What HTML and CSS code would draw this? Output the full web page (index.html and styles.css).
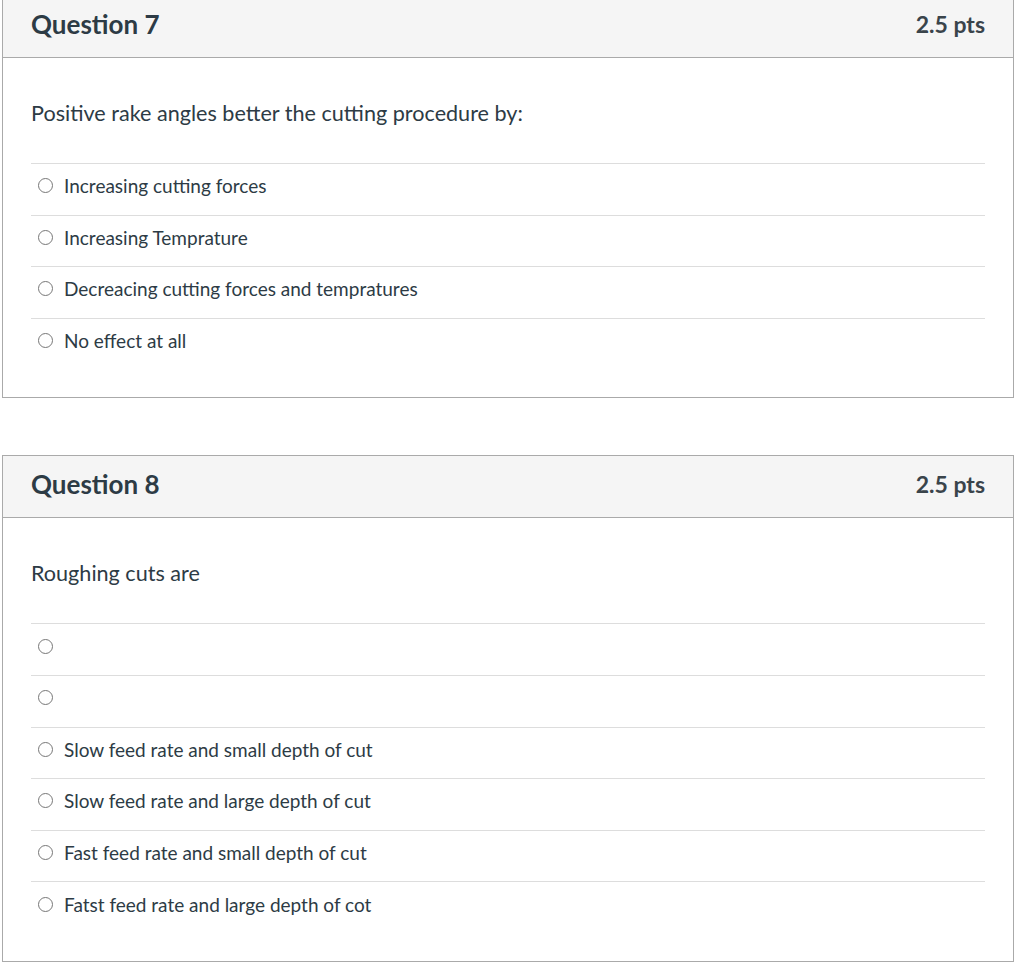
FILE: index.html
```html
<!DOCTYPE html>
<html>
<head>
  <title>Quiz</title>
  <link rel="stylesheet" href="styles.css">
</head>
<body>
  <div class="quiz">
    <div class="question">
      <div class="question-header">
        <h2 class="question-title">Question 7</h2>
        <span class="question-points">2.5 pts</span>
      </div>
      <div class="question-body">
        <div class="question-text">Positive rake angles better the cutting procedure by:</div>
        <div class="answers">
          <label class="answer"><span class="radio"></span><span class="answer-text">Increasing cutting forces</span></label>
          <label class="answer"><span class="radio"></span><span class="answer-text">Increasing Temprature</span></label>
          <label class="answer"><span class="radio"></span><span class="answer-text">Decreacing cutting forces and tempratures</span></label>
          <label class="answer"><span class="radio"></span><span class="answer-text">No effect at all</span></label>
        </div>
      </div>
    </div>

    <div class="question">
      <div class="question-header">
        <h2 class="question-title">Question 8</h2>
        <span class="question-points">2.5 pts</span>
      </div>
      <div class="question-body">
        <div class="question-text">Roughing cuts are</div>
        <div class="answers">
          <label class="answer"><span class="radio"></span><span class="answer-text"></span></label>
          <label class="answer"><span class="radio"></span><span class="answer-text"></span></label>
          <label class="answer"><span class="radio"></span><span class="answer-text">Slow feed rate and small depth of cut</span></label>
          <label class="answer"><span class="radio"></span><span class="answer-text">Slow feed rate and large depth of cut</span></label>
          <label class="answer"><span class="radio"></span><span class="answer-text">Fast feed rate and small depth of cut</span></label>
          <label class="answer"><span class="radio"></span><span class="answer-text">Fatst feed rate and large depth of cot</span></label>
        </div>
      </div>
    </div>
  </div>
</body>
</html>
```

FILE: styles.css
```css
* {
  box-sizing: border-box;
}

body {
  margin: 0;
  font-family: Lato, 'Noto Sans', sans-serif;
  color: #2d3b45;
  background: #fff;
}

.quiz {
  margin-top: -5px;
  margin-left: 2px;
  width: 1012px;
}

.question {
  border: 1px solid #aaa;
  margin-bottom: 57px;
}

.question-header {
  display: flex;
  justify-content: space-between;
  align-items: center;
  height: 62px;
  padding: 0 28px 5px;
  background: #f5f5f5;
  border-bottom: 1px solid #aaa;
}

.question-title {
  margin: 0;
  font-size: 26px;
  font-weight: bold;
}

.question-points {
  font-size: 23px;
  font-weight: bold;
  color: #3a444b;
}

.question-body {
  padding: 0 28px 28px;
}

.question-text {
  font-size: 21.6px;
  line-height: 30px;
  padding-top: 40px;
  padding-bottom: 35px;
}

.answer {
  display: flex;
  align-items: center;
  height: 51.6px;
  padding-bottom: 7px;
  border-top: 1px solid #ddd;
  font-size: 19px;
}

.radio {
  width: 15px;
  height: 15px;
  margin-left: 7px;
  margin-right: 11px;
  border: 1.3px solid #777;
  border-radius: 50%;
  flex-shrink: 0;
}
```
